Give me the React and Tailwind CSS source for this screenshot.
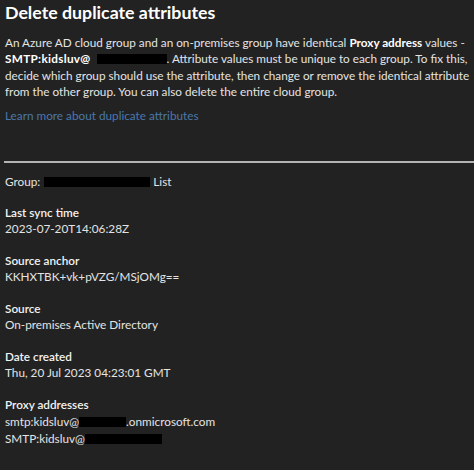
import React from "react";

function Redact({ w, className = "" }) {
  return (
    <span
      className={`inline-block h-[10px] bg-black align-[-1px] ${className}`}
      style={{ width: w }}
    />
  );
}

function Field({ label, children }) {
  return (
    <div className="flex flex-col">
      <div className="font-semibold text-[#f2f2f2] leading-[16px]">{label}</div>
      <div className="leading-[16px] text-[#e4e4e4]">{children}</div>
    </div>
  );
}

export default function App() {
  return (
    <div
      className="w-[474px] h-[470px] overflow-hidden bg-[#222222] text-[#e4e4e4] text-[11.75px]"
      style={{ fontFamily: 'Lato, "Noto Sans", sans-serif' }}
    >
      <div className="pl-[5px]">
        <h1 className="text-[17.75px] font-bold leading-[24px] text-white whitespace-nowrap">
          Delete duplicate attributes
        </h1>
        <div className="mt-[11px] leading-[16.4px] whitespace-nowrap">
          <div>
            An Azure AD cloud group and an on-premises group have identical{" "}
            <span className="font-bold text-white">Proxy address</span> values -
          </div>
          <div>
            <span className="font-bold text-white tracking-[0.3px]">SMTP:kidsluv@</span>
            <Redact w={70} className="ml-[6px]" />. Attribute values must be unique to each group. To fix this,
          </div>
          <div>decide which group should use the attribute, then change or remove the identical attribute</div>
          <div>from the other group. You can also delete the entire cloud group.</div>
        </div>
        <div className="mt-[7px] leading-[16.4px] text-[#4a78ab]">
          Learn more about duplicate attributes
        </div>
      </div>
      <div className="ml-[4px] mt-[37px] h-[2px] bg-[#b4b4b4]" />
      <div className="pl-[5px] pt-[11px]">
        <div className="leading-[16px]">
          Group: <Redact w={106} className="ml-[1px]" /> List
        </div>
        <div className="mt-[15px] flex flex-col gap-[16px]">
          <Field label="Last sync time">2023-07-20T14:06:28Z</Field>
          <Field label="Source anchor">KKHXTBK+vk+pVZG/MSjOMg==</Field>
          <Field label="Source">On-premises Active Directory</Field>
          <Field label="Date created">Thu, 20 Jul 2023 04:23:01 GMT</Field>
          <Field label="Proxy addresses">
            <div className="leading-[17px]">
              smtp:kidsluv@<Redact w={47} />.onmicrosoft.com
            </div>
            <div className="leading-[17px]">
              SMTP:kidsluv@<Redact w={77} />
            </div>
          </Field>
        </div>
      </div>
    </div>
  );
}
